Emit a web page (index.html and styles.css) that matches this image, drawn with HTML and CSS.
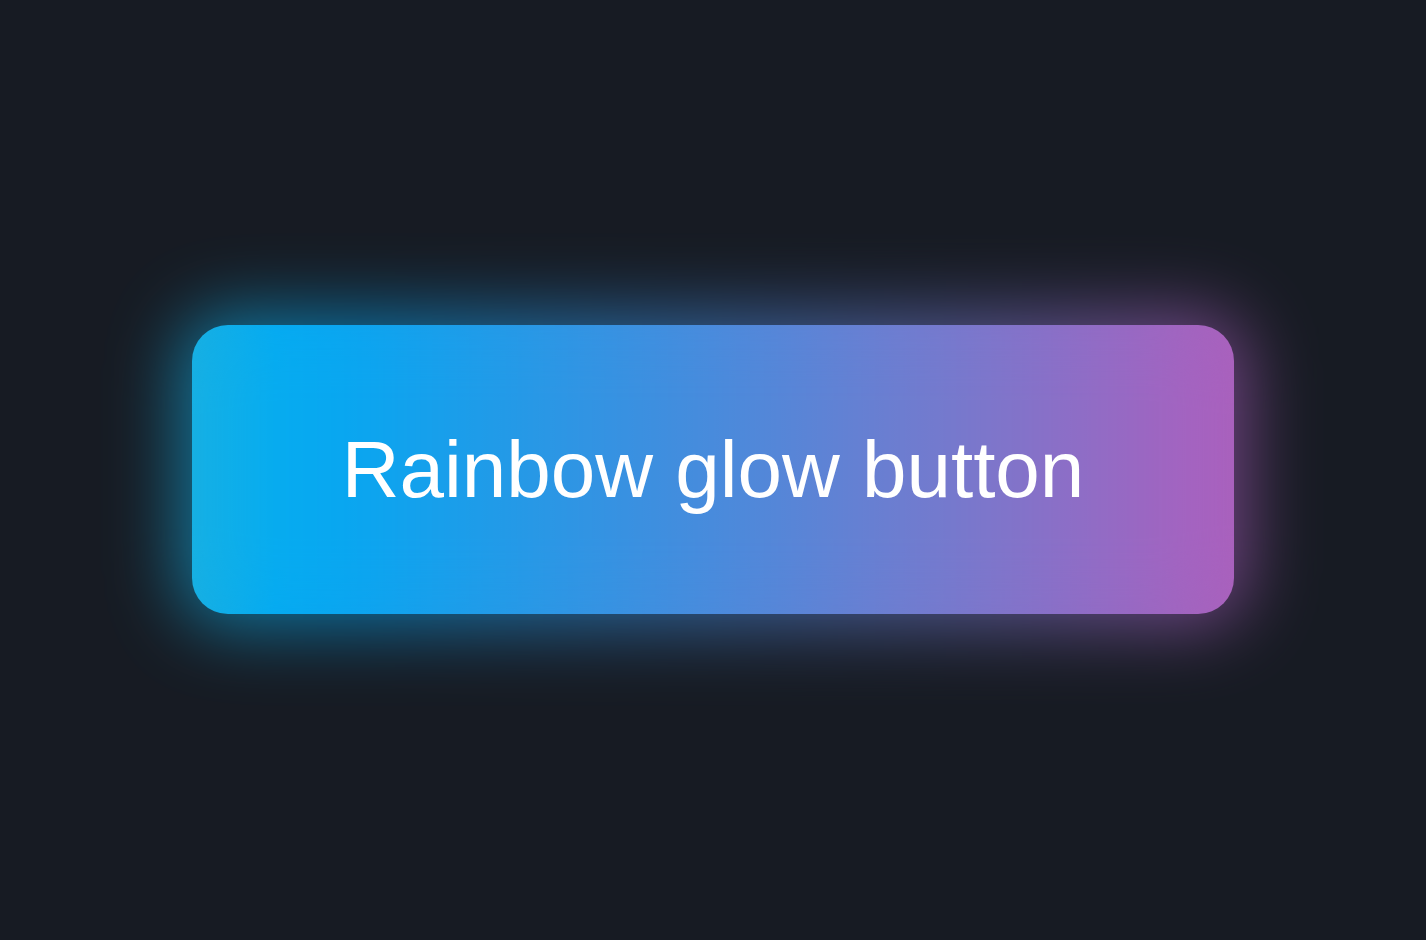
FILE: index.html
```html
<!DOCTYPE html>
<html>
    <head>
        <title>Rainbow glow button</title>
        <meta charset="UTF-8">
        <meta name="viewport" content="width=device-width, initial-scale=1.0">
        <link rel="stylesheet" href="styles.css">
    </head>
    <body>
        <main class="stage">
            <button class="glow-btn" type="button">Rainbow glow button</button>
        </main>
    </body>
</html>
```

FILE: styles.css
```css
* {
    box-sizing: border-box;
}

body {
    margin: 0;
    background: #171b23;
    font-family: 'Liberation Sans', Arial, sans-serif;
}

/* Centre the button a little above the middle */
.stage {
    height: 940px;
    display: flex;
    justify-content: center;
    padding-top: 325px;
}

.glow-btn {
    position: relative;
    width: 1042px;
    height: 289px;
    border: none;
    border-radius: 36px;
    color: #fff;
    font-family: inherit;
    font-size: 80px;
    cursor: pointer;
    background: linear-gradient(90deg, #1aaedf 0%, #03a9f3 8%, #2799e6 30%, #4d8bdc 50%, #717dd0 68%, #8c6ec6 84%, #a862bb 100%);
    isolation: isolate;
}

/* Soft coloured halo behind the button */
.glow-btn::before {
    content: "";
    position: absolute;
    inset: -12px;
    border-radius: 48px;
    background: linear-gradient(90deg, #14b4e6 0%, #03a9f3 15%, #3c8fe0 45%, #7a78cc 75%, #b25cbf 100%);
    filter: blur(36px);
    opacity: 0.62;
    z-index: -1;
}
```
